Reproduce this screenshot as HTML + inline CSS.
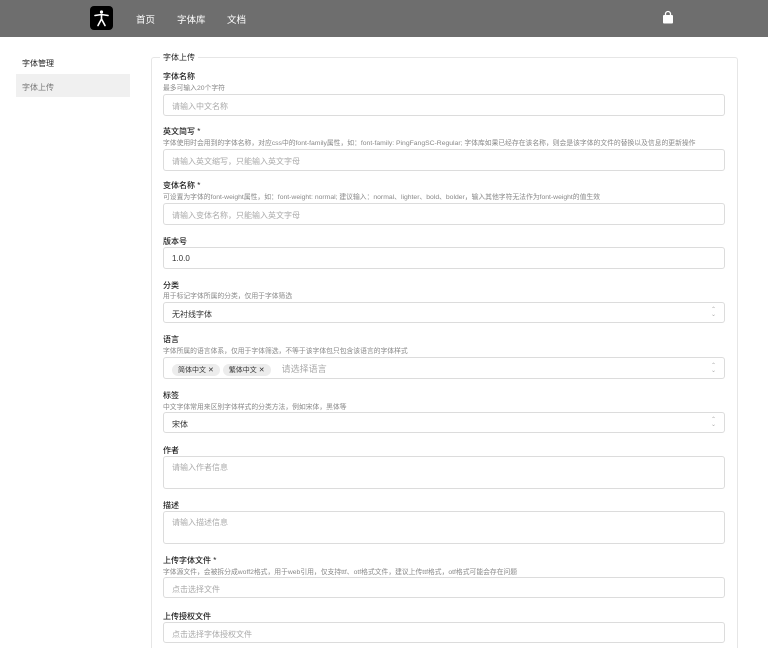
<!DOCTYPE html>
<html><head><meta charset="utf-8"><style>
*{box-sizing:border-box;margin:0;padding:0}
html,body{width:768px;height:648px;overflow:hidden}
body{background:#fff;font-family:"Liberation Sans","Noto Sans CJK SC",sans-serif;position:relative;color:#222}
.a{position:absolute;white-space:nowrap}
.hd{left:0;top:0;width:768px;height:37px;background:#6e6e6e}
.nav{color:#fff;font-size:9.5px;top:12px}
.lbl{font-size:8px;color:#222;left:163px;font-weight:500}
.ds{font-size:6.8px;color:#888;left:163px}
.in{left:163px;width:562px;height:22px;border:1px solid #dcdcdc;border-radius:3px;font-size:8px;color:#aaa;padding:6px 0 0 8px}
.in.v{color:#333}
.ta{height:33px;padding-top:5px}
.ar{position:absolute;right:8px;top:5px;font-size:6px;color:#aaa;line-height:5px}
.tag{display:inline-block;background:#ececec;border-radius:8px;padding:1px 6px;color:#333;font-size:7px;margin-right:3px}
</style></head><body>
<div class="a hd"></div>
<div class="a" style="left:90px;top:6px;width:23px;height:24px;background:#000;border-radius:4px">
<svg width="23" height="24" viewBox="0 0 23 24"><g stroke="#fff" stroke-width="1.6" fill="none" stroke-linecap="round"><circle cx="11.5" cy="6" r="1.6" fill="#fff" stroke="none"/><path d="M5 9.5 L11.5 8.5 L18 9.5 M11.5 8.5 L11.5 13 M11.5 13 L8 19.5 M11.5 13 L15 19.5"/></g></svg></div>
<div class="a nav" style="left:136px">首页</div>
<div class="a nav" style="left:177px">字体库</div>
<div class="a nav" style="left:227px">文档</div>
<svg class="a" style="left:662px;top:10px" width="12" height="14" viewBox="0 0 12 14"><path d="M3.5 6 V4 a2.5 2.5 0 0 1 5 0 V6" stroke="#fff" stroke-width="1.3" fill="none"/><rect x="1" y="5" width="10" height="8.5" rx="1" fill="#fff"/></svg>

<div class="a" style="left:22px;top:58px;font-size:8px;color:#222">字体管理</div>
<div class="a" style="left:16px;top:74px;width:114px;height:23px;background:#f0f0f0"></div>
<div class="a" style="left:22px;top:82px;font-size:8px;color:#777">字体上传</div>

<div class="a" style="left:151px;top:57px;width:587px;height:600px;border:1px solid #e6e6e6;border-radius:3px"></div>
<div class="a" style="left:160px;top:52px;padding:0 3px;background:#fff;font-size:8px;color:#222">字体上传</div>

<div class="a lbl" style="top:71px">字体名称</div>
<div class="a ds" style="top:82px">最多可输入20个字符</div>
<div class="a in" style="top:94px">请输入中文名称</div>

<div class="a lbl" style="top:126px">英文简写 *</div>
<div class="a ds" style="top:137px">字体使用时会用到的字体名称，对应css中的font-family属性，如：font-family: PingFangSC-Regular; 字体库如果已经存在该名称，则会是该字体的文件的替换以及信息的更新操作</div>
<div class="a in" style="top:149px">请输入英文缩写，只能输入英文字母</div>

<div class="a lbl" style="top:180px">变体名称 *</div>
<div class="a ds" style="top:191px">可设置为字体的font-weight属性，如：font-weight: normal; 建议输入：normal、lighter、bold、bolder，输入其他字符无法作为font-weight的值生效</div>
<div class="a in" style="top:203px">请输入变体名称，只能输入英文字母</div>

<div class="a lbl" style="top:236px">版本号</div>
<div class="a in v" style="top:247px">1.0.0</div>

<div class="a lbl" style="top:280px">分类</div>
<div class="a ds" style="top:290px">用于标记字体所属的分类，仅用于字体筛选</div>
<div class="a in v" style="top:302px;height:21px">无衬线字体<span class="ar">⌃<br>⌄</span></div>

<div class="a lbl" style="top:334px">语言</div>
<div class="a ds" style="top:345px">字体所属的语言体系，仅用于字体筛选，不等于该字体包只包含该语言的字体样式</div>
<div class="a in" style="top:357px;padding-top:4px"><span class="tag">简体中文 ✕</span><span class="tag">繁体中文 ✕</span><span style="font-size:9px;margin-left:8px">请选择语言</span><span class="ar" style="top:6px">⌃<br>⌄</span></div>

<div class="a lbl" style="top:390px">标签</div>
<div class="a ds" style="top:401px">中文字体常用来区别字体样式的分类方法，例如宋体，黑体等</div>
<div class="a in v" style="top:412px;height:21px">宋体<span class="ar">⌃<br>⌄</span></div>

<div class="a lbl" style="top:445px">作者</div>
<div class="a in ta" style="top:456px">请输入作者信息</div>

<div class="a lbl" style="top:500px">描述</div>
<div class="a in ta" style="top:511px">请输入描述信息</div>

<div class="a lbl" style="top:555px">上传字体文件 *</div>
<div class="a ds" style="top:566px">字体源文件，会被拆分成woff2格式，用于web引用，仅支持ttf、otf格式文件，建议上传ttf格式，otf格式可能会存在问题</div>
<div class="a in" style="top:577px;height:21px">点击选择文件</div>

<div class="a lbl" style="top:611px">上传授权文件</div>
<div class="a in" style="top:622px;height:21px">点击选择字体授权文件</div>
</body></html>
